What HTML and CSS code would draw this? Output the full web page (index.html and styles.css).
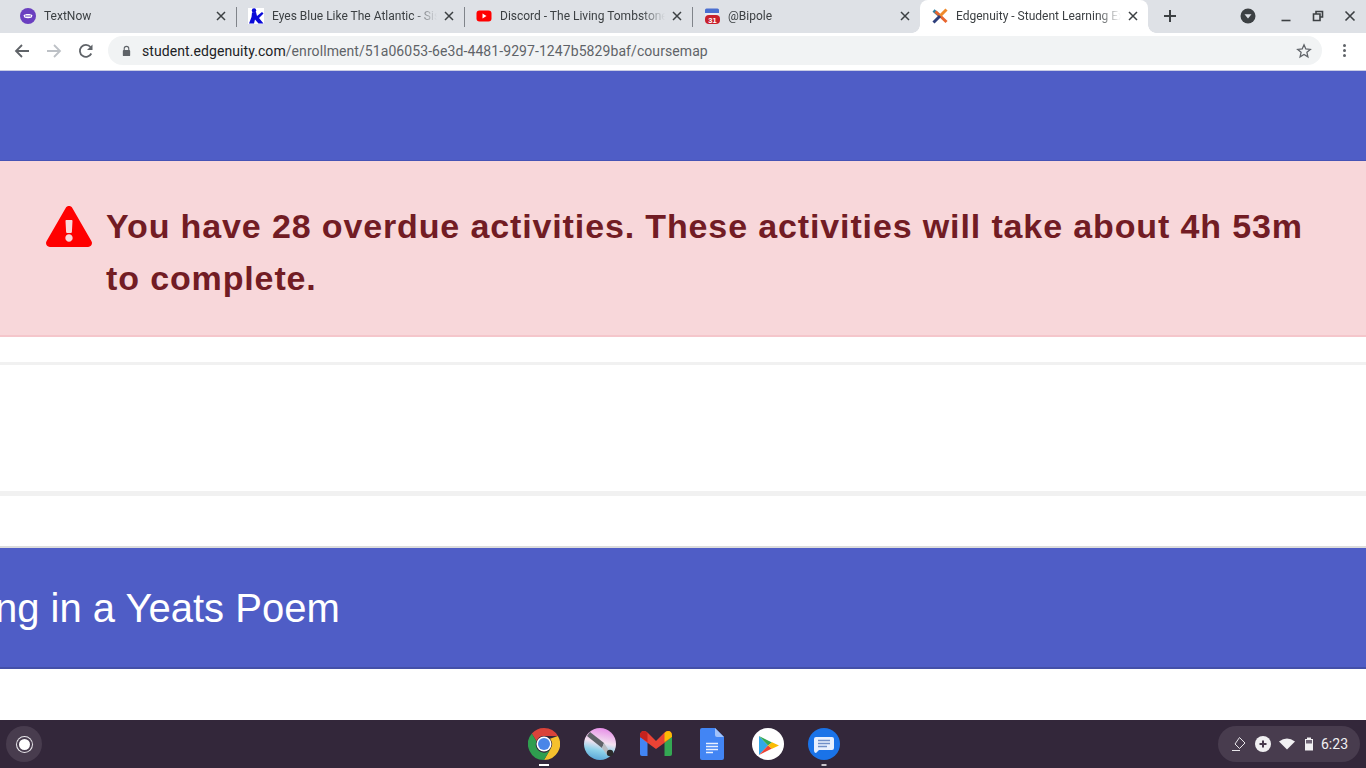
FILE: index.html
```html
<!DOCTYPE html>
<html lang="en">
<head>
  <meta charset="UTF-8">
  <meta name="viewport" content="width=device-width, initial-scale=1.0">
  <title>Edgenuity - Student Learning Experience</title>
  <link rel="stylesheet" href="styles.css">
</head>
<body>
  <div class="tabstrip">
    <div class="tab">
      <svg class="favicon" viewBox="0 0 16 16"><circle cx="8" cy="8" r="8" fill="#6a3fc0"/><path d="M3.500 7.600C4.500 5.600 11.500 5.600 12.500 7.600L11.600 9.600C9.500 10.600 6.500 10.600 4.400 9.600Z" fill="#fff"/><path d="M5 8H11" stroke="#6a3fc0" stroke-width="1"/></svg>
      <span class="tab-title">TextNow</span>
      <svg class="tab-close" viewBox="0 0 16 16"><path d="M4 4L12 12M12 4L4 12" stroke="#3c4043" stroke-width="1.500"/></svg>
    </div>
    <div class="tab sep">
      <svg class="favicon" viewBox="0 0 16 16"><rect width="16" height="16" fill="#fff"/><circle cx="6" cy="2.500" r="2.200" fill="#0a0ad8"/><path d="M4 4.500L8 4 9 8 14 4 15.500 5.500 11 10 15.500 15.500H10.500L7 11.500 6 15.500H1L3.500 9Z" fill="#0a0ad8"/></svg>
      <span class="tab-title">Eyes Blue Like The Atlantic - Sisters</span>
      <svg class="tab-close" viewBox="0 0 16 16"><path d="M4 4L12 12M12 4L4 12" stroke="#3c4043" stroke-width="1.500"/></svg>
    </div>
    <div class="tab sep">
      <svg class="favicon" viewBox="0 0 16 16"><rect x="0.500" y="2.500" width="15" height="11" rx="3" fill="#f00"/><path d="M6.500 5.500L10.500 8 6.500 10.500Z" fill="#fff"/></svg>
      <span class="tab-title">Discord - The Living Tombstone</span>
      <svg class="tab-close" viewBox="0 0 16 16"><path d="M4 4L12 12M12 4L4 12" stroke="#3c4043" stroke-width="1.500"/></svg>
    </div>
    <div class="tab sep">
      <svg class="favicon" viewBox="0 0 16 16"><path d="M1 2Q1 0.500 2.500 0.500H13.500Q15 0.500 15 2V5H1Z" fill="#4a6fd0"/><rect x="1" y="5" width="14" height="5" fill="#e8eaf0"/><rect x="1" y="7" width="15" height="9" rx="4" fill="#c8202c"/><text class="cal-day" x="8.500" y="14.500">31</text></svg>
      <span class="tab-title">@Bipole</span>
      <svg class="tab-close" viewBox="0 0 16 16"><path d="M4 4L12 12M12 4L4 12" stroke="#3c4043" stroke-width="1.500"/></svg>
    </div>
    <div class="tab active">
      <svg class="favicon" viewBox="0 0 16 16"><path d="M1.500 2.500L8 8" stroke="#2f7f9f" stroke-width="3"/><path d="M3.500 3.500L14.500 14" stroke="#e8652e" stroke-width="3"/><path d="M14.500 1.500L8 8" stroke="#ef8a2c" stroke-width="3"/><path d="M8 8L1.500 14.500" stroke="#2e3f7c" stroke-width="3"/></svg>
      <span class="tab-title">Edgenuity - Student Learning Experience</span>
      <svg class="tab-close" viewBox="0 0 16 16"><path d="M4 4L12 12M12 4L4 12" stroke="#3c4043" stroke-width="1.500"/></svg>
    </div>
    <div class="newtab">
      <svg class="icon14" viewBox="0 0 14 14"><path d="M7 1V13M1 7H13" stroke="#3c4043" stroke-width="2"/></svg>
    </div>
    <div class="window-controls">
      <svg class="search-tabs" viewBox="0 0 16 16"><circle cx="8" cy="8" r="7.500" fill="#3c4043"/><path d="M4.500 6.300H11.500L8 10.500Z" fill="#dee1e6"/></svg>
      <div class="window-btns">
        <svg class="icon14" viewBox="0 0 14 14"><path d="M2.500 11.500H11.500" stroke="#3c4043" stroke-width="1.600"/></svg>
        <svg class="icon14" viewBox="0 0 14 14"><path d="M5 5V2.500H11.500V8H9M2.500 5H9V11.500H2.500Z" fill="none" stroke="#3c4043" stroke-width="1.600"/></svg>
        <svg class="icon14" viewBox="0 0 14 14"><path d="M2.500 2.500L11.500 11.500M11.500 2.500L2.500 11.500" stroke="#3c4043" stroke-width="1.600"/></svg>
      </div>
    </div>
  </div>

  <div class="toolbar">
    <svg class="nav-icon" viewBox="0 0 16 16"><path d="M15 8H2M8 2L2 8 8 14" fill="none" stroke="#5f6368" stroke-width="1.800"/></svg>
    <svg class="nav-icon" viewBox="0 0 16 16"><path d="M1 8H14M8 2L14 8 8 14" fill="none" stroke="#bdc1c6" stroke-width="1.800"/></svg>
    <svg class="nav-icon" viewBox="0 0 16 16"><path d="M13.300 10.500A6 6 0 1 1 12.500 4" fill="none" stroke="#5f6368" stroke-width="1.800"/><path d="M14.500 1.500V7H9Z" fill="#5f6368"/></svg>
    <div class="omnibox">
      <svg class="lock" viewBox="0 0 12 12"><path d="M3.500 5V3.500A2.500 2.500 0 0 1 8.500 3.500V5" fill="none" stroke="#5f6368" stroke-width="1.200"/><rect x="2" y="5" width="8" height="6.500" rx="1" fill="#5f6368"/></svg>
      <span class="url"><span class="url-host">student.edgenuity.com</span>/enrollment/51a06053-6e3d-4481-9297-1247b5829baf/coursemap</span>
      <svg class="star" viewBox="0 0 16 16"><path d="M8 1.800L9.800 6 14.300 6.400 10.900 9.300 11.900 13.800 8 11.400 4.100 13.800 5.100 9.300 1.700 6.400 6.200 6Z" fill="none" stroke="#5f6368" stroke-width="1.300"/></svg>
    </div>
    <div class="menu-dots"><i></i><i></i><i></i></div>
  </div>

  <main class="page">
    <div class="topbar"></div>
    <div class="alert">
      <svg class="alert-icon" viewBox="0 0 576 512"><path d="M569.517 440.013C587.975 472.007 564.806 512 527.94 512H48.054c-36.937 0-59.999-40.055-41.577-71.987L246.423 24.028c18.467-32.009 64.72-31.951 83.154 0l239.94 416.985zM288 354c-25.405 0-46 20.595-46 46s20.595 46 46 46 46-20.595 46-46-20.595-46-46-46zm-43.673-165.346l7.418 136c.347 6.364 5.609 11.346 11.982 11.346h48.546c6.373 0 11.635-4.982 11.982-11.346l7.418-136c.375-6.874-5.098-12.654-11.982-12.654h-63.383c-6.884 0-12.356 5.78-11.981 12.654z" fill="#f00"/></svg>
      <p class="alert-text">You have 28 overdue activities. These activities will take about 4h 53m to complete.</p>
    </div>
    <div class="gap-small"></div>
    <div class="panel-tall"></div>
    <div class="panel-short"></div>
    <div class="lesson-bar"><h1 class="lesson-title">ng in a Yeats Poem</h1></div>
    <div class="page-rest"></div>
  </main>

  <footer class="shelf">
    <div class="launcher"><span class="launcher-dot"></span></div>
    <div class="apps">
      <div class="app running-big">
        <svg class="app-icon" viewBox="0 0 32 32">
          <path d="M16 0A16 16 0 0 1 29.900 8H16A8 8 0 0 0 8.500 13.200L3.800 5.600A16 16 0 0 1 16 0Z" fill="#d9433a"/>
          <path d="M29.900 8A16 16 0 0 1 16 32L23 20A8 8 0 0 0 22 10.700Z" fill="#f5c12e"/>
          <path d="M3.800 5.600A16 16 0 0 0 16 32L23 20A8 8 0 0 1 8.500 13.200Z" fill="#2f9e4f"/>
          <circle cx="16" cy="16" r="7.500" fill="#fff"/><circle cx="16" cy="16" r="6" fill="#4a86e8"/>
        </svg>
      </div>
      <div class="app">
        <svg class="app-icon" viewBox="0 0 32 32">
          <defs><linearGradient id="canvasgrad" x1="0.600" y1="0" x2="0.400" y2="1"><stop offset="0" stop-color="#e78ee8"/><stop offset="0.450" stop-color="#f3e3f0"/><stop offset="0.700" stop-color="#8fd3ea"/><stop offset="1" stop-color="#5aa7d8"/></linearGradient></defs>
          <circle cx="16" cy="16" r="16" fill="url(#canvasgrad)"/>
          <path d="M3 8L6 4 20 15 18 20Z" fill="#5f6368"/><path d="M18 20L20 15 26 24 23 27Z" fill="#b9bcc0"/><circle cx="26" cy="25" r="3.200" fill="#2b2b2b"/>
        </svg>
      </div>
      <div class="app">
        <svg class="app-icon" viewBox="0 0 32 32">
          <path d="M0 9V26Q0 28 2 28H7.500V13Z" fill="#4285f4"/><path d="M32 9V26Q32 28 30 28H24.500V13Z" fill="#34a853"/>
          <path d="M0 8Q0 3 4 3 6 3 8 5L16 13 24 5Q26 3 28 3 32 3 32 8L27 13 16 21 5 13Z" fill="#ea4335"/>
          <path d="M24.500 5Q26 3 28 3 32 3 32 8V9L24.500 14Z" fill="#fbbc04"/><path d="M0 8Q0 3 4 3 6 3 7.500 5V14L0 9Z" fill="#c5221f"/>
        </svg>
      </div>
      <div class="app">
        <svg class="app-icon" viewBox="0 0 32 32">
          <path d="M6 0H19L28 9V30Q28 32 26 32H6Q4 32 4 30V2Q4 0 6 0Z" fill="#4285f4"/>
          <path d="M19 0L28 9H21Q19 9 19 7Z" fill="#a1c2fa"/>
          <path d="M10 15.500H22M10 18.500H22M10 21.500H22M10 24.500H17" stroke="#e8f0fe" stroke-width="1.300"/>
        </svg>
      </div>
      <div class="app">
        <svg class="app-icon" viewBox="0 0 32 32">
          <circle cx="16" cy="16" r="16" fill="#fff"/>
          <path d="M7 8V27L16 17.500Z" fill="#30a8e8"/>
          <path d="M7 8L20 14.500 16 17.500Z" fill="#34a853"/><path d="M7 27L20 20.500 16 17.500Z" fill="#ea4335"/>
          <path d="M20 14.300L27 17.500 20 20.700 16 17.500Z" fill="#fbbc04"/>
        </svg>
      </div>
      <div class="app running-small">
        <svg class="app-icon" viewBox="0 0 32 32">
          <circle cx="16" cy="16" r="16" fill="#1a73e8"/>
          <path d="M8 9H24Q26 9 26 11V20Q26 22 24 22H11L8 25Q6 25 6 22V11Q6 9 8 9Z" fill="#e8f0fe"/>
          <path d="M10 12.500H22M10 15.500H22M10 18.500H19" stroke="#6f8fc8" stroke-width="1.300"/>
        </svg>
      </div>
    </div>
    <div class="tray">
      <svg class="tray-icon" viewBox="0 0 16 16"><path d="M8.500 1.500L14 7 8.500 12.500 4 8ZM1 14.500H9" fill="none" stroke="#e8e6ea" stroke-width="1"/></svg>
      <svg class="tray-icon" viewBox="0 0 16 16"><circle cx="8" cy="8" r="8" fill="#f1f0f2"/><path d="M8 4.500V11.500M4.500 8H11.500" stroke="#473a4c" stroke-width="2"/></svg>
      <svg class="tray-icon" viewBox="0 0 16 16"><path d="M0 5.500Q8 -0.500 16 5.500L8 13.500Z" fill="#f1f0f2"/></svg>
      <svg class="tray-battery" viewBox="0 0 12 16"><path d="M4 1.500H8V3H10V14.500H2V3H4Z" fill="#f1f0f2"/><rect x="3" y="4" width="6" height="3.500" fill="#6f6475"/></svg>
      <span class="clock">6:23</span>
    </div>
  </footer>
</body>
</html>
```

FILE: styles.css
```css
* {
  box-sizing: border-box;
}

html,
body {
  height: 768px;
  margin: 0;
  overflow: hidden;
}

body {
  display: flex;
  flex-direction: column;
  font-family: Roboto, "Liberation Sans", sans-serif;
  background-color: #fff;
}

/* browser tabs */
.tabstrip {
  display: flex;
  align-items: center;
  flex: 0 0 33px;
  padding-left: 8px;
  background-color: #dee1e6;
}

.tab {
  display: flex;
  align-items: center;
  position: relative;
  flex: 0 0 228px;
  min-width: 0;
  height: 33px;
  padding: 0 7px 1px 12px;
}

.tab.sep::before {
  content: "";
  position: absolute;
  left: 0;
  top: 7px;
  width: 1px;
  height: 20px;
  background-color: #80848a;
}

.tab.active {
  background-color: #fff;
  border-radius: 8px 8px 0 0;
}

/* little curves where the active tab meets the toolbar */
.tab.active::before,
.tab.active::after {
  content: "";
  position: absolute;
  bottom: 0;
  width: 8px;
  height: 8px;
}

.tab.active::before {
  left: -8px;
  background: radial-gradient(circle at 0 0, transparent 7.500px, #fff 8px);
}

.tab.active::after {
  right: -8px;
  background: radial-gradient(circle at 100% 0, transparent 7.500px, #fff 8px);
}

.favicon {
  flex: 0 0 16px;
  width: 16px;
  height: 16px;
  margin-right: 8px;
}

.cal-day {
  font-family: "Liberation Sans", sans-serif;
  font-size: 7.500px;
  font-weight: bold;
  text-anchor: middle;
  fill: #fff;
}

.tab-title {
  flex: 1;
  min-width: 0;
  overflow: hidden;
  white-space: nowrap;
  font-size: 12px;
  color: #3c4043;
  -webkit-mask-image: linear-gradient(to right, #000 calc(100% - 24px), transparent 100%);
  mask-image: linear-gradient(to right, #000 calc(100% - 24px), transparent 100%);
}

.tab-close {
  flex: 0 0 16px;
  width: 16px;
  height: 16px;
  margin-left: 4px;
}

.newtab {
  display: flex;
  justify-content: center;
  width: 44px;
  padding-bottom: 1px;
}

.icon14 {
  width: 14px;
  height: 14px;
}

.window-controls {
  display: flex;
  align-items: center;
  flex: 1;
  padding-bottom: 1px;
}

.search-tabs {
  width: 16px;
  height: 16px;
  margin-left: 48px;
}

.window-btns {
  display: flex;
  gap: 18px;
  margin-left: 23px;
}

/* toolbar + omnibox */
.toolbar {
  display: flex;
  align-items: center;
  flex: 0 0 38px;
  padding: 0 0 2px 14px;
  background-color: #fff;
  border-bottom: 1px solid #c9cce4;
}

.nav-icon {
  width: 16px;
  height: 16px;
  margin-right: 16px;
}

.omnibox {
  display: flex;
  align-items: center;
  width: 1214px;
  height: 29px;
  margin-left: -2px;
  padding: 0 10px 0 13px;
  background-color: #f1f3f4;
  border-radius: 15px;
}

.lock {
  width: 11px;
  height: 12px;
  margin-right: 10px;
}

.url {
  flex: 1;
  font-size: 14px;
  letter-spacing: 0.08px;
  color: #5f6368;
  white-space: nowrap;
}

.url-host {
  color: #202124;
}

.star {
  width: 16px;
  height: 16px;
}

.menu-dots {
  display: flex;
  flex-direction: column;
  gap: 2px;
  margin-left: 21px;
}

.menu-dots i {
  width: 3px;
  height: 3px;
  border-radius: 50%;
  background-color: #5f6368;
}

/* page */
.page {
  flex: 1;
  display: flex;
  flex-direction: column;
  overflow: hidden;
  font-family: "Liberation Sans", Arial, sans-serif;
}

.topbar {
  flex: 0 0 90px;
  background-color: #4f5dc6;
  border-bottom: 1px solid #4653b5;
}

.alert {
  display: flex;
  align-items: flex-start;
  flex: 0 0 176px;
  padding: 39px 50px 0 46px;
  background-color: #f8d7da;
  border-bottom: 2px solid #f5c6cb;
}

.alert-icon {
  flex: 0 0 46px;
  width: 46px;
  height: 41px;
  margin: 6px 14px 0 0;
}

.alert-text {
  margin: 0;
  font-size: 34px;
  line-height: 52px;
  font-weight: bold;
  letter-spacing: 0.87px;
  color: #721c24;
}

.gap-small {
  flex: 0 0 28px;
  border-bottom: 3px solid #f1f1f1;
}

.panel-tall {
  flex: 0 0 131px;
  border-bottom: 5px solid #f1f1f1;
}

.panel-short {
  flex: 0 0 52px;
  border-bottom: 2px solid #dcdcdc;
}

.lesson-bar {
  display: flex;
  align-items: center;
  flex: 0 0 121px;
  background-color: #4f5dc6;
  border-bottom: 2px solid #4450a8;
}

.lesson-title {
  margin: 2px 0 0 -5px;
  font-size: 40px;
  font-weight: normal;
  color: #fff;
  white-space: nowrap;
}

.page-rest {
  flex: 1;
  background-color: #fff;
}

/* chromeos shelf */
.shelf {
  display: flex;
  align-items: center;
  flex: 0 0 48px;
  background-color: #33273a;
}

.launcher {
  display: flex;
  align-items: center;
  justify-content: center;
  width: 36px;
  height: 36px;
  margin-left: 6px;
  border-radius: 50%;
  background-color: #483c4e;
}

.launcher-dot {
  width: 11px;
  height: 11px;
  border-radius: 50%;
  background-color: #fff;
  box-shadow: 0 0 0 2px #483c4e, 0 0 0 3px #e8e6ea;
}

.apps {
  display: flex;
  gap: 24px;
  margin-left: 486px;
}

.app {
  position: relative;
  display: flex;
  width: 32px;
  height: 32px;
}

.app-icon {
  width: 32px;
  height: 32px;
}

.running-big::after,
.running-small::after {
  content: "";
  position: absolute;
  bottom: -6px;
  left: 50%;
  height: 2px;
  background-color: #fff;
  transform: translateX(-50%);
}

.running-big::after {
  width: 10px;
}

.running-small::after {
  width: 5px;
  background-color: #c9c5cc;
}

.tray {
  display: flex;
  align-items: center;
  gap: 8px;
  height: 36px;
  margin-left: auto;
  margin-right: 6px;
  padding: 0 12px 0 13px;
  border-radius: 18px;
  background-color: #483c4e;
}

.tray-icon {
  width: 16px;
  height: 16px;
}

.tray-battery {
  width: 12px;
  height: 16px;
}

.clock {
  margin-left: -2px;
  font-size: 14px;
  color: #f1f0f2;
}
```
